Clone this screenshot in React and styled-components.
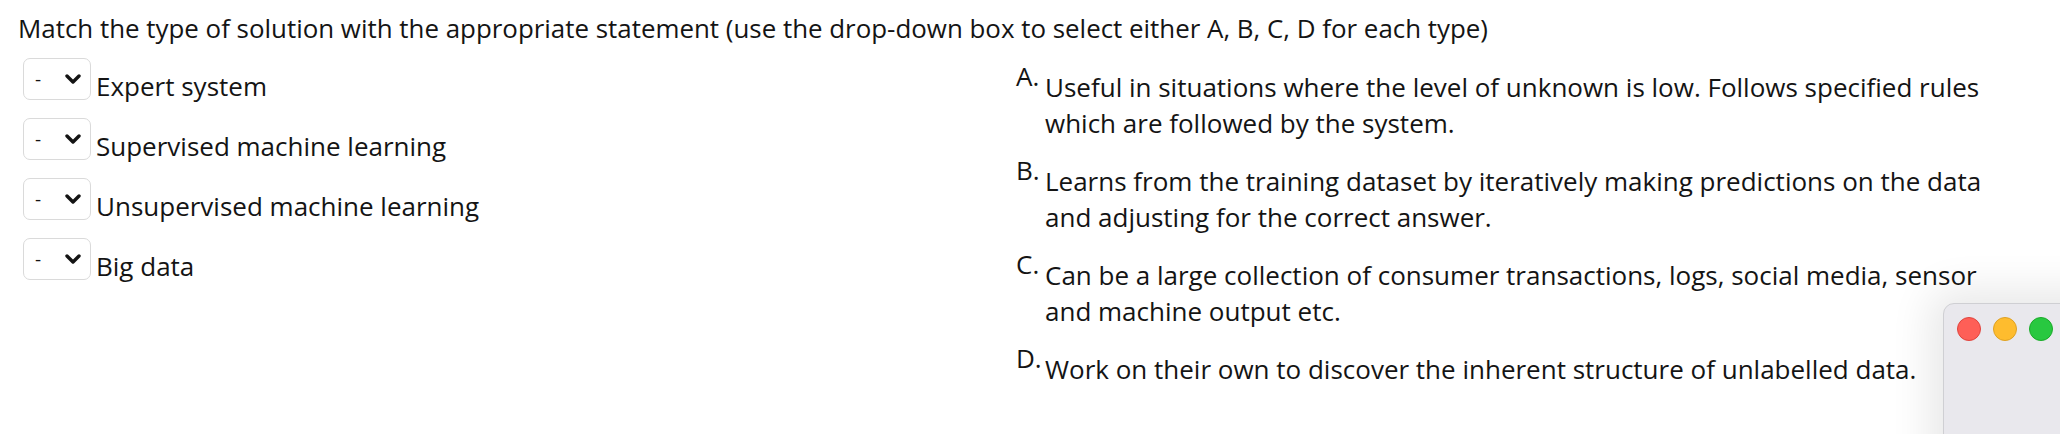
import React from "react";
import styled, { createGlobalStyle } from "styled-components";

const GlobalStyle = createGlobalStyle`
  html, body {
    margin: 0;
    padding: 0;
    background: #ffffff;
  }
  body {
    font-family: "Open Sans", "Noto Sans", sans-serif;
    color: #141414;
    overflow: hidden;
  }
`;

const Page = styled.div`
  position: relative;
  width: 2060px;
  height: 434px;
  padding: 13px 0 0 18px;
  box-sizing: border-box;
  overflow: hidden;
`;

const Title = styled.p`
  margin: 0;
  font-size: 25.9px;
  line-height: 30px;
  white-space: nowrap;
`;

const Columns = styled.div`
  display: grid;
  grid-template-columns: 998px 1000px;
  margin-top: 15px;
`;

const TypeList = styled.div`
  display: flex;
  flex-direction: column;
  gap: 18px;
  padding-left: 5px;
`;

const TypeRow = styled.div`
  display: flex;
  align-items: flex-end;
  gap: 5px;
`;

const SelectBox = styled.div`
  position: relative;
  width: 68px;
  height: 42px;
`;

const Select = styled.select`
  appearance: none;
  width: 100%;
  height: 100%;
  box-sizing: border-box;
  margin: 0;
  padding: 0 0 0 11px;
  border: 1px solid #dadada;
  border-radius: 7px;
  background: #ffffff;
  font-family: "Open Sans", sans-serif;
  font-size: 19px;
  color: #141414;
  outline: none;
`;

const Chevron = styled.svg`
  position: absolute;
  right: 10px;
  top: 16px;
  width: 16px;
  height: 10px;
  pointer-events: none;
`;

const TypeLabel = styled.span`
  font-size: 26px;
  line-height: 24px;
  padding-bottom: 2px;
  white-space: nowrap;
`;

const StatementList = styled.div`
  display: flex;
  flex-direction: column;
  gap: 22px;
  padding-top: 11px;
`;

const Statement = styled.div`
  display: grid;
  grid-template-columns: 29px 1fr;
  align-items: start;
  font-size: 26px;
`;

const Letter = styled.span`
  line-height: 14px;
`;

const StatementText = styled.span`
  line-height: 36px;
`;

const MiniWindow = styled.div`
  position: absolute;
  left: 1943px;
  top: 303px;
  width: 200px;
  height: 200px;
  display: flex;
  gap: 12px;
  padding: 13px 0 0 13px;
  box-sizing: border-box;
  background: #e9e8ed;
  border: 1px solid #cfcfd3;
  border-radius: 11px 0 0 0;
  box-shadow: 0 0 40px 14px rgba(0, 0, 0, 0.09);
`;

const Light = styled.span`
  width: 24px;
  height: 24px;
  border-radius: 50%;
  box-sizing: border-box;
  background: ${(p) => p.$fill};
  border: 1px solid ${(p) => p.$edge};
`;

const types = [
  "Expert system",
  "Supervised machine learning",
  "Unsupervised machine learning",
  "Big data",
];

const statements = [
  {
    letter: "A.",
    text: "Useful in situations where the level of unknown is low. Follows specified rules which are followed by the system.",
  },
  {
    letter: "B.",
    text: "Learns from the training dataset by iteratively making predictions on the data and adjusting for the correct answer.",
  },
  {
    letter: "C.",
    text: "Can be a large collection of consumer transactions, logs, social media, sensor and machine output etc.",
  },
  {
    letter: "D.",
    text: "Work on their own to discover the inherent structure of unlabelled data.",
  },
];

function TypeSelect() {
  return (
    <SelectBox>
      <Select defaultValue="-">
        <option value="-">-</option>
        <option value="A">A</option>
        <option value="B">B</option>
        <option value="C">C</option>
        <option value="D">D</option>
      </Select>
      <Chevron viewBox="0 0 16 10">
        <path
          d="M2 2 L8 8 L14 2"
          fill="none"
          stroke="#141414"
          strokeWidth="3.4"
          strokeLinecap="round"
          strokeLinejoin="round"
        />
      </Chevron>
    </SelectBox>
  );
}

export default function App() {
  return (
    <>
      <GlobalStyle />
      <Page>
        <Title>
          Match the type of solution with the appropriate statement (use the
          drop-down box to select either A, B, C, D for each type)
        </Title>
        <Columns>
          <TypeList>
            {types.map((t) => (
              <TypeRow key={t}>
                <TypeSelect />
                <TypeLabel>{t}</TypeLabel>
              </TypeRow>
            ))}
          </TypeList>
          <StatementList>
            {statements.map((s) => (
              <Statement key={s.letter}>
                <Letter>{s.letter}</Letter>
                <StatementText>{s.text}</StatementText>
              </Statement>
            ))}
          </StatementList>
        </Columns>
        <MiniWindow>
          <Light $fill="#fe5f57" $edge="#e0443e" />
          <Light $fill="#febc2e" $edge="#dea123" />
          <Light $fill="#28c840" $edge="#1aab29" />
        </MiniWindow>
      </Page>
    </>
  );
}
